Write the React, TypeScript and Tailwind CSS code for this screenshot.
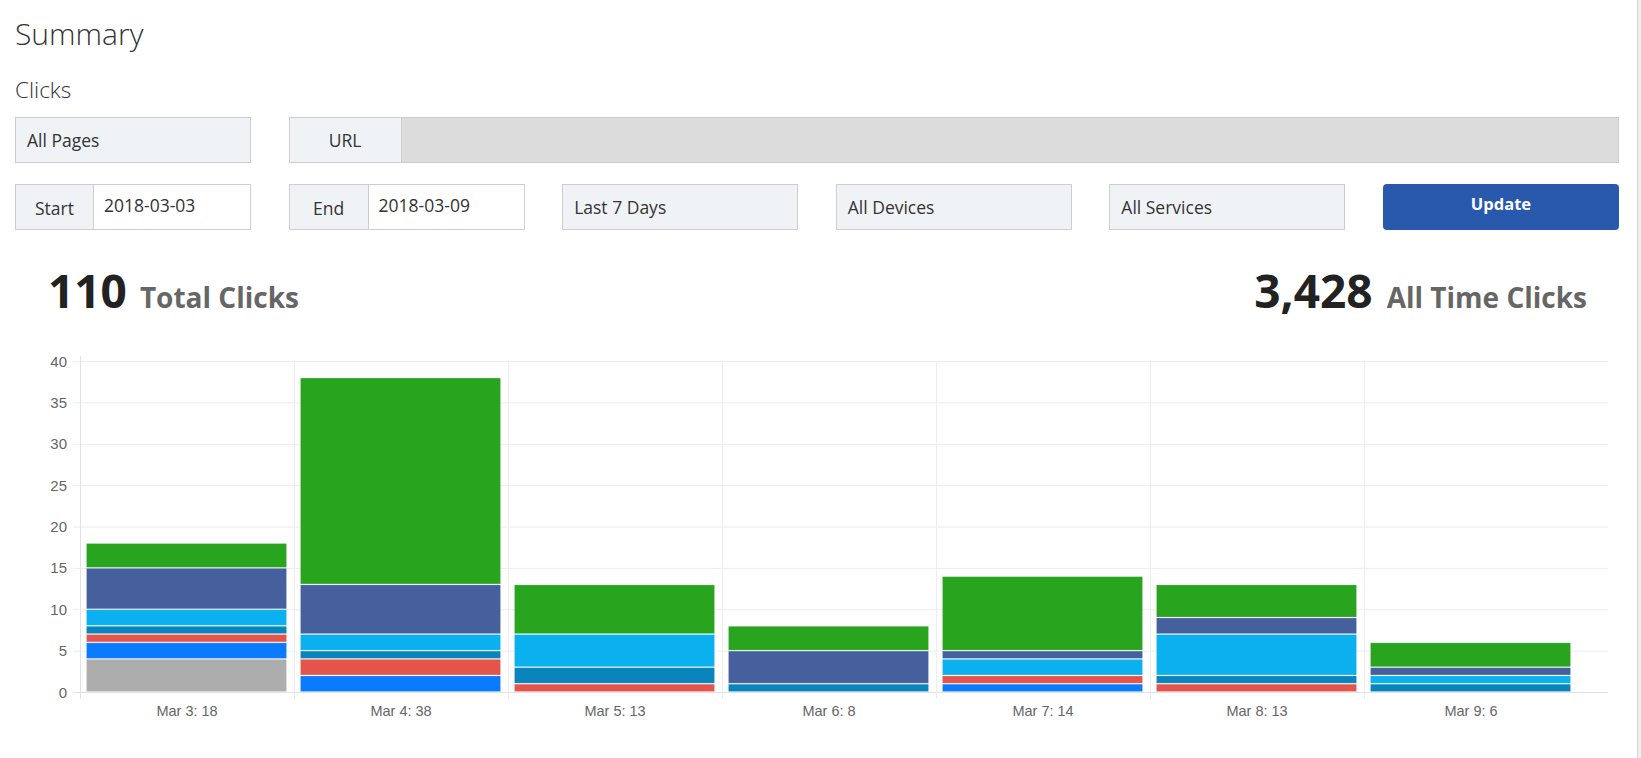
import React from "react";

const COLORS = ["#adadad", "#0a7bfd", "#e3554b", "#0a84bc", "#0bb0ee", "#45609c", "#29a41f"];

// stack order bottom -> top: gray, blue, red, teal, lightblue, navy, green
const DATA: { label: string; values: number[] }[] = [
  { label: "Mar 3: 18", values: [4, 2, 1, 1, 2, 5, 3] },
  { label: "Mar 4: 38", values: [0, 2, 2, 1, 2, 6, 25] },
  { label: "Mar 5: 13", values: [0, 0, 1, 2, 4, 0, 6] },
  { label: "Mar 6: 8", values: [0, 0, 0, 1, 0, 4, 3] },
  { label: "Mar 7: 14", values: [0, 1, 1, 0, 2, 1, 9] },
  { label: "Mar 8: 13", values: [0, 0, 1, 1, 5, 2, 4] },
  { label: "Mar 9: 6", values: [0, 0, 0, 1, 1, 1, 3] },
];

const Y0 = 693;
const YTOP = 362;
const UNIT = (Y0 - YTOP) / 40;
const X0 = 80;
const CAT = 214;
const XEND = 1608;

function Chart() {
  const ticks = [0, 5, 10, 15, 20, 25, 30, 35, 40];
  return (
    <svg width={1637} height={444} viewBox="0 314 1637 444" className="block">
      {ticks.map((t) => {
        const y = Y0 - t * UNIT;
        return (
          <g key={t}>
            <line x1={73} x2={XEND} y1={y + 0.5} y2={y + 0.5} stroke={t === 0 ? "#e2e2e2" : "#ededed"} strokeWidth={1} />
            <text
              x={67}
              y={y + 5.5}
              textAnchor="end"
              fontFamily="'Liberation Sans', Arial, sans-serif"
              fontSize={15}
              fill="#666"
            >
              {t}
            </text>
          </g>
        );
      })}
      {Array.from({ length: 7 }).map((_, i) => (
        <line
          key={i}
          x1={X0 + CAT * i + 0.5}
          x2={X0 + CAT * i + 0.5}
          y1={i === 0 ? 357 : YTOP}
          y2={Y0 + 7}
          stroke={i === 0 ? "#e2e2e2" : "#ededed"}
          strokeWidth={1}
        />
      ))}
      {DATA.map((d, i) => {
        const bx = X0 + CAT * i + 6;
        const bw = 201;
        let acc = 0;
        const rects: React.ReactNode[] = [];
        d.values.forEach((v, k) => {
          if (v <= 0) return;
          const yTopSeg = Y0 - (acc + v) * UNIT;
          const h = v * UNIT;
          rects.push(
            <rect
              key={k}
              x={bx + 0.5}
              y={yTopSeg + 0.5}
              width={bw - 1}
              height={h - 1}
              fill={COLORS[k]}
              stroke="rgba(255,255,255,0.16)"
              strokeWidth={1}
            />
          );
          acc += v;
        });
        return (
          <g key={d.label}>
            {rects}
            <text
              x={X0 + CAT * i + 107}
              y={717}
              textAnchor="middle"
              fontFamily="'Liberation Sans', Arial, sans-serif"
              fontSize={14.5}
              fill="#666"
            >
              {d.label}
            </text>
          </g>
        );
      })}
    </svg>
  );
}

function Box({ children, className = "" }: { children?: React.ReactNode; className?: string }) {
  return (
    <div
      className={
        "h-[46px] border border-[#cecece] bg-[#f0f3f5] px-[11px] pt-[1px] flex items-center text-[17.5px] text-[#333] " +
        className
      }
    >
      {children}
    </div>
  );
}

function LabeledInput({ label, value, labelW }: { label: string; value: string; labelW: string }) {
  return (
    <div className="h-[46px] border border-[#cecece] flex text-[17.5px] text-[#333]">
      <div className={"bg-[#f0f3f5] border-r border-[#cecece] flex items-center justify-center pt-[4px] " + labelW}>
        {label}
      </div>
      <div className="flex-1 bg-white flex items-center px-[10px] pb-[2px]">{value}</div>
    </div>
  );
}

export default function App() {
  return (
    <div
      className="flex w-[1641px] h-[758px] bg-white overflow-hidden"
      style={{ fontFamily: "'Open Sans', 'Noto Sans', sans-serif" }}
    >
      <div className="flex-1 min-w-0">
        <div className="pl-[15px] pr-[18px]">
          <h1 className="mt-[19px] text-[30px] leading-none font-light text-[#333]">Summary</h1>
          <h2 className="mt-[30px] text-[22.5px] leading-none font-light text-[#333]">Clicks</h2>
          <div className="mt-[15px] grid grid-cols-6 gap-x-[37.5px]">
            <Box>All Pages</Box>
            <div className="col-span-5 h-[46px] border border-[#cecece] flex text-[17.5px] text-[#333]">
              <div className="w-[112px] bg-[#f0f3f5] border-r border-[#cecece] flex items-center justify-center pt-[1px]">
                URL
              </div>
              <div className="flex-1 bg-[#dcdcdc]" />
            </div>
          </div>
          <div className="mt-[21px] grid grid-cols-6 gap-x-[37.5px]">
            <LabeledInput label="Start" value="2018-03-03" labelW="w-[78px]" />
            <LabeledInput label="End" value="2018-03-09" labelW="w-[79px]" />
            <Box>Last 7 Days</Box>
            <Box>All Devices</Box>
            <Box>All Services</Box>
            <button className="h-[46px] rounded-[4px] bg-[#2859ad] text-white font-bold text-[16.5px] pb-[4px] flex items-center justify-center">
              Update
            </button>
          </div>
        </div>
        <div className="mt-[37px] mb-[2px] pl-[48px] pr-[50px] flex justify-between items-baseline h-[44px]">
          <div className="flex items-baseline">
            <span className="text-[46px] leading-none font-bold text-[#222]">110</span>
            <span className="ml-[13px] text-[28px] leading-none font-bold text-[#666]">Total Clicks</span>
          </div>
          <div className="flex items-baseline">
            <span className="text-[46px] leading-none font-bold text-[#222]">3,428</span>
            <span className="ml-[14px] text-[28px] leading-none font-bold text-[#666]">All Time Clicks</span>
          </div>
        </div>
        <Chart />
      </div>
      <div className="w-[4px] h-full border-l border-[#d6d6d6] bg-[#efefef]" />
    </div>
  );
}
